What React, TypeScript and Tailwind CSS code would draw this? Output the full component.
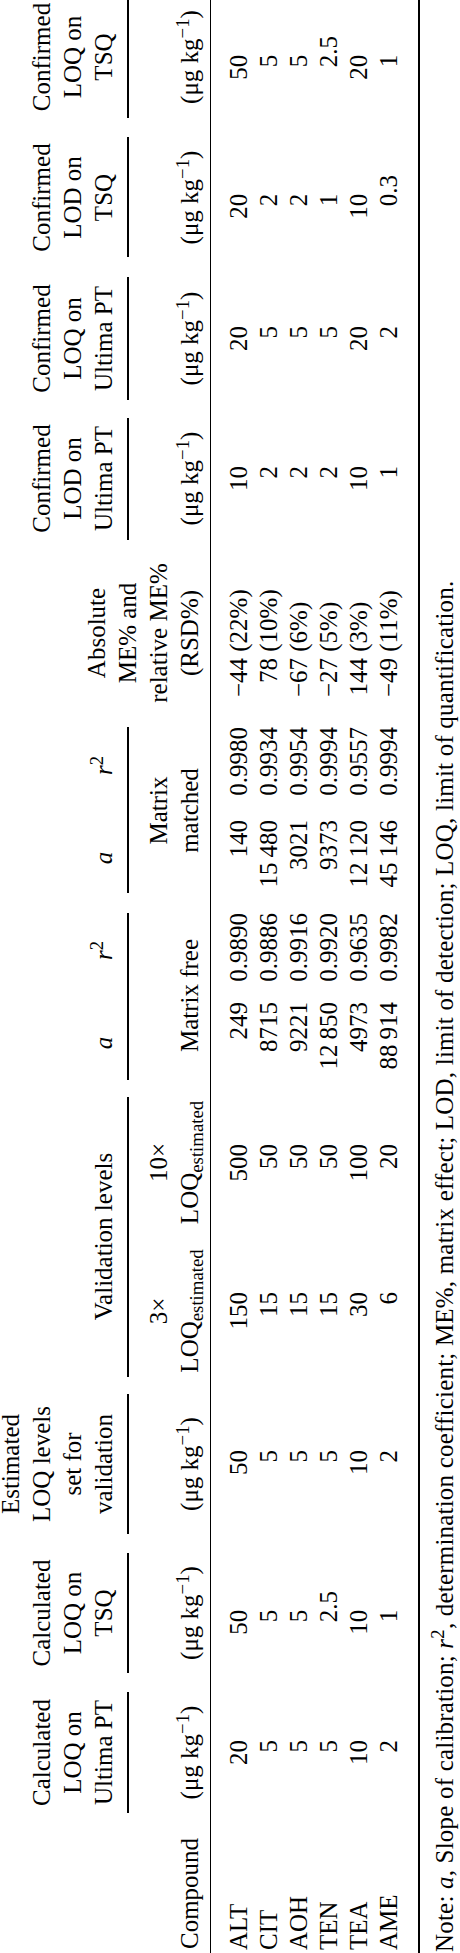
import React from "react";

const COLS =
  "grid grid-cols-[131px_139px_140px_158px_148px_149px_90px_95px_90px_95px_170px_139px_141px_141px_140px]";

function Units() {
  return (
    <span>
      (μg kg<sup>−1</sup>)
    </span>
  );
}

function R2() {
  return (
    <span>
      <i>r</i>
      <sup>2</sup>
    </span>
  );
}

function Dec({ v, frac }: { v: string; frac: string }) {
  const [i, f] = v.split(".");
  return (
    <>
      {i}
      <span className={f ? "" : "invisible"}>.{f ?? frac}</span>
    </>
  );
}

type Row = {
  c: string;
  cu: string;
  ct: string;
  est: string;
  v3: string;
  v10: string;
  mfa: string;
  mfr: string;
  mma: string;
  mmr: string;
  me: string;
  mep: string;
  lodu: string;
  loqu: string;
  lodt: string;
  loqt: string;
};

const rows: Row[] = [
  { c: "ALT", cu: "20", ct: "50", est: "50", v3: "150", v10: "500", mfa: "249", mfr: "0.9890", mma: "140", mmr: "0.9980", me: "−44", mep: "(22%)", lodu: "10", loqu: "20", lodt: "20", loqt: "50" },
  { c: "CIT", cu: "5", ct: "5", est: "5", v3: "15", v10: "50", mfa: "8715", mfr: "0.9886", mma: "15\u2009480", mmr: "0.9934", me: "78", mep: "(10%)", lodu: "2", loqu: "5", lodt: "2", loqt: "5" },
  { c: "AOH", cu: "5", ct: "5", est: "5", v3: "15", v10: "50", mfa: "9221", mfr: "0.9916", mma: "3021", mmr: "0.9954", me: "−67", mep: "(6%)", lodu: "2", loqu: "5", lodt: "2", loqt: "5" },
  { c: "TEN", cu: "5", ct: "2.5", est: "5", v3: "15", v10: "50", mfa: "12\u2009850", mfr: "0.9920", mma: "9373", mmr: "0.9994", me: "−27", mep: "(5%)", lodu: "2", loqu: "5", lodt: "1", loqt: "2.5" },
  { c: "TEA", cu: "10", ct: "10", est: "10", v3: "30", v10: "100", mfa: "4973", mfr: "0.9635", mma: "12\u2009120", mmr: "0.9557", me: "144", mep: "(3%)", lodu: "10", loqu: "20", lodt: "10", loqt: "20" },
  { c: "AME", cu: "2", ct: "1", est: "2", v3: "6", v10: "20", mfa: "88\u2009914", mfr: "0.9982", mma: "45\u2009146", mmr: "0.9994", me: "−49", mep: "(11%)", lodu: "1", loqu: "2", lodt: "0.3", loqt: "1" },
];

function Header() {
  return (
    <div className={`${COLS} grid-rows-[124px_8px_2px_14px_62px] text-center leading-[31px]`}>
      {/* header row 1 */}
      <div className="col-start-2 row-start-1 self-end">
        Calculated<br />LOQ on<br />Ultima PT
      </div>
      <div className="col-start-3 row-start-1 self-end">
        Calculated<br />LOQ on<br />TSQ
      </div>
      <div className="col-start-4 row-start-1 self-end">
        Estimated<br />LOQ levels<br />set for<br />validation
      </div>
      <div className="col-start-5 col-span-2 row-start-1 self-end">Validation levels</div>
      <div className="col-start-7 row-start-1 self-end">
        <i>a</i>
      </div>
      <div className="col-start-8 row-start-1 self-end">
        <R2 />
      </div>
      <div className="col-start-9 row-start-1 self-end">
        <i>a</i>
      </div>
      <div className="col-start-10 row-start-1 self-end">
        <R2 />
      </div>
      <div className="col-start-11 row-start-1 row-span-5 self-end">
        Absolute<br />ME% and<br />relative ME%<br />(RSD%)
      </div>
      <div className="col-start-12 row-start-1 self-end">
        Confirmed<br />LOD on<br />Ultima PT
      </div>
      <div className="col-start-13 row-start-1 self-end">
        Confirmed<br />LOQ on<br />Ultima PT
      </div>
      <div className="col-start-14 row-start-1 self-end">
        Confirmed<br />LOD on<br />TSQ
      </div>
      <div className="col-start-15 row-start-1 self-end">
        Confirmed<br />LOQ on<br />TSQ
      </div>

      {/* cmidrules */}
      <div className="col-start-2 row-start-3 mx-[9px] bg-black" />
      <div className="col-start-3 row-start-3 mx-[10px] bg-black" />
      <div className="col-start-4 row-start-3 mx-[9px] bg-black" />
      <div className="col-start-5 col-span-2 row-start-3 ml-[8px] mr-[9px] bg-black" />
      <div className="col-start-7 col-span-2 row-start-3 ml-[8px] mr-[10px] bg-black" />
      <div className="col-start-9 col-span-2 row-start-3 ml-[10px] mr-[9px] bg-black" />
      <div className="col-start-12 row-start-3 ml-[8px] mr-[9px] bg-black" />
      <div className="col-start-13 row-start-3 ml-[9px] mr-[9px] bg-black" />
      <div className="col-start-14 row-start-3 ml-[11px] mr-[10px] bg-black" />
      <div className="col-start-15 row-start-3 ml-[9px] mr-[9px] bg-black" />

      {/* header row 2 */}
      <div className="col-start-1 row-start-5 self-end text-left pl-[4px]">Compound</div>
      <div className="col-start-2 row-start-5 self-end">
        <Units />
      </div>
      <div className="col-start-3 row-start-5 self-end">
        <Units />
      </div>
      <div className="col-start-4 row-start-5 self-end">
        <Units />
      </div>
      <div className="col-start-5 row-start-5 self-end">
        3×<br />
        LOQ<sub>estimated</sub>
      </div>
      <div className="col-start-6 row-start-5 self-end">
        10×<br />
        LOQ<sub>estimated</sub>
      </div>
      <div className="col-start-7 col-span-2 row-start-5 self-end">Matrix free</div>
      <div className="col-start-9 col-span-2 row-start-5 self-end">
        Matrix<br />matched
      </div>
      <div className="col-start-12 row-start-5 self-end">
        <Units />
      </div>
      <div className="col-start-13 row-start-5 self-end">
        <Units />
      </div>
      <div className="col-start-14 row-start-5 self-end">
        <Units />
      </div>
      <div className="col-start-15 row-start-5 self-end">
        <Units />
      </div>
    </div>
  );
}

function DataRow({ r }: { r: Row }) {
  return (
    <div className={`${COLS} h-[30px] leading-[30px] whitespace-nowrap`}>
      <div className="text-left pl-[3px]">{r.c}</div>
      <div className="text-right pr-[57px]">{r.cu}</div>
      <div className="text-right pr-[48px]">
        <Dec v={r.ct} frac="5" />
      </div>
      <div className="text-right pr-[65px]">{r.est}</div>
      <div className="text-right pr-[55px]">{r.v3}</div>
      <div className="text-right pr-[56px]">{r.v10}</div>
      <div className="text-right pr-[4px]">{r.mfa}</div>
      <div className="text-right pr-[10px]">{r.mfr}</div>
      <div className="text-right pr-[7px]">{r.mma}</div>
      <div className="text-right pr-[9px]">{r.mmr}</div>
      <div className="flex pl-[21px]">
        <span className="w-[39px] text-right">{r.me}</span>
        <span>{"\u00a0" + r.mep}</span>
      </div>
      <div className="text-right pr-[57px]">{r.lodu}</div>
      <div className="text-right pr-[58px]">{r.loqu}</div>
      <div className="text-right pr-[48px]">
        <Dec v={r.lodt} frac="3" />
      </div>
      <div className="text-right pr-[49px]">
        <Dec v={r.loqt} frac="5" />
      </div>
    </div>
  );
}

export default function App() {
  return (
    <div className="relative w-[460px] h-[1953px] overflow-hidden bg-white">
      <div className="flex flex-col w-[1966px] h-[460px] origin-top-left translate-y-[1953px] -rotate-90 font-['Liberation_Serif',serif] text-[25px] text-black">
        <div className="-mt-[5px]">
          <Header />
        </div>
        <div className="mt-[5px] h-[2px] w-full bg-black" />
        <div className="mt-[13px] flex flex-col">
          {rows.map((r) => (
            <DataRow key={r.c} r={r} />
          ))}
        </div>
        <div className="mt-[14px] h-[3px] w-full bg-black" />
        <div className="mt-[10px] leading-[30px] whitespace-nowrap pl-[1px] tracking-[0.2px]">
          Note: <i>a</i>, Slope of calibration; <i>r</i>
          <sup>2</sup>, determination coefficient; ME%, matrix effect; LOD, limit of detection; LOQ, limit of
          quantification.
        </div>
      </div>
    </div>
  );
}
